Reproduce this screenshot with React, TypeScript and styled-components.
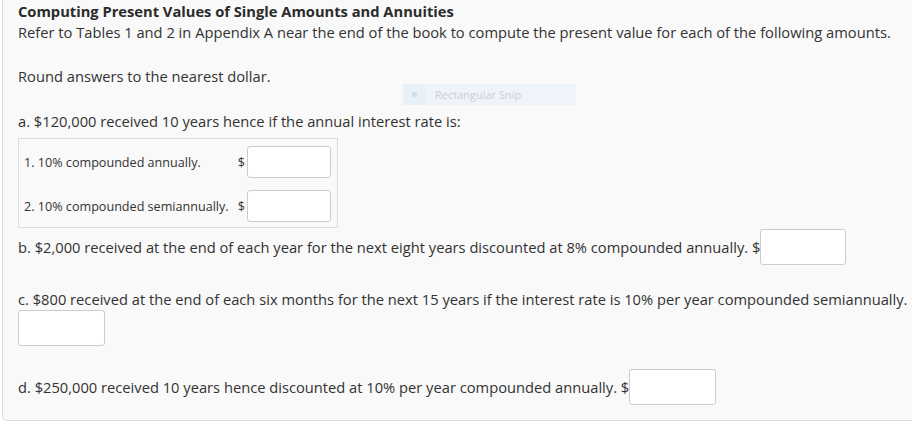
import React from "react";
import styled, { createGlobalStyle } from "styled-components";

const Global = createGlobalStyle`
  html, body { margin: 0; padding: 0; background: #ffffff; }
  body { font-family: "Open Sans", "Liberation Sans", sans-serif; color: #333; }
`;

const Frame = styled.div`
  position: relative;
  margin-left: 2px;
  width: 910px;
  height: 421px;
  box-sizing: border-box;
  background: #f9f9f9;
  border-left: 1px solid #dcdcdc;
  border-bottom: 1px solid #dcdcdc;
  border-bottom-left-radius: 5px;
  padding: 1px 0 0 15px;
  font-size: 14.7px;
  line-height: 21px;
  overflow: hidden;
`;

const Title = styled.div`
  font-weight: 700;
  color: #2b2b2b;
  white-space: nowrap;
`;

const Para = styled.div<{ $mt?: number }>`
  margin-top: ${(p) => p.$mt ?? 0}px;
  white-space: nowrap;
`;

const SubBox = styled.div`
  margin-top: 6px;
  width: 320px;
  box-sizing: border-box;
  border: 1px solid #dddddd;
  padding: 7px 6px 5px 5px;
  display: grid;
  grid-template-columns: 1fr 84px;
  row-gap: 12px;
`;

const SubLabel = styled.div`
  font-size: 12.6px;
  display: flex;
  align-items: center;
  white-space: nowrap;
`;

const Dollar = styled.span`
  margin-left: auto;
  margin-right: 2px;
`;

const Input = styled.div<{ $w?: number; $h?: number }>`
  width: ${(p) => p.$w ?? 84}px;
  height: ${(p) => p.$h ?? 32}px;
  box-sizing: border-box;
  background: #ffffff;
  border: 1px solid #cccccc;
  border-radius: 3px;
  flex: none;
`;

const Line = styled.div<{ $mt?: number }>`
  display: flex;
  align-items: center;
  margin-top: ${(p) => p.$mt ?? 0}px;
  white-space: nowrap;
`;

const Snip = styled.div`
  position: absolute;
  left: 400px;
  top: 84px;
  width: 173px;
  height: 21px;
  background: #eff4fa;
  display: flex;
  align-items: center;
  font-size: 11px;
  color: #c9cfd6;
`;

const SnipIcon = styled.div`
  width: 22px;
  height: 21px;
  background: #e8f0f9;
  display: flex;
  align-items: center;
  justify-content: center;
  margin-right: 10px;
  &::after {
    content: "";
    width: 5px;
    height: 5px;
    border-radius: 50%;
    background: #d6dce3;
  }
`;

export default function App() {
  return (
    <>
      <Global />
      <Frame>
        <Title>Computing Present Values of Single Amounts and Annuities</Title>
        <Para>
          Refer to Tables 1 and 2 in Appendix A near the end of the book to compute the present value for each of the following amounts.
        </Para>
        <Para $mt={23}>Round answers to the nearest dollar.</Para>
        <Para $mt={24}>a. $120,000 received 10 years hence if the annual interest rate is:</Para>
        <SubBox>
          <SubLabel>1. 10% compounded annually.<Dollar>$</Dollar></SubLabel>
          <Input />
          <SubLabel>2. 10% compounded semiannually.<Dollar>$</Dollar></SubLabel>
          <Input />
        </SubBox>
        <Line $mt={1}>
          b. $2,000 received at the end of each year for the next eight years discounted at 8% compounded annually. $
          <Input $w={86} $h={36} />
        </Line>
        <Para $mt={24}>
          c. $800 received at the end of each six months for the next 15 years if the interest rate is 10% per year compounded semiannually.
        </Para>
        <Line $mt={0}>
          <Input $w={87} $h={36} />
        </Line>
        <Line $mt={23}>
          d. $250,000 received 10 years hence discounted at 10% per year compounded annually. $
          <Input $w={87} $h={36} />
        </Line>
        <Snip>
          <SnipIcon />
          Rectangular Snip
        </Snip>
      </Frame>
    </>
  );
}
